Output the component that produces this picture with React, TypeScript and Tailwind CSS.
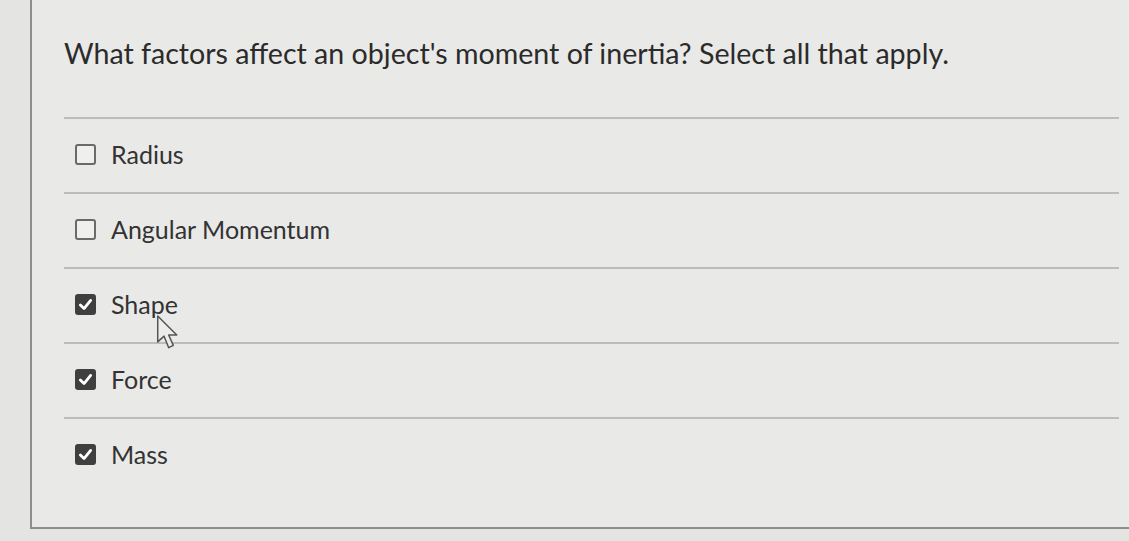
import React from "react";

const options = [
  { label: "Radius", checked: false },
  { label: "Angular Momentum", checked: false },
  { label: "Shape", checked: true },
  { label: "Force", checked: true },
  { label: "Mass", checked: true },
];

function Box({ checked }: { checked: boolean }) {
  if (checked) {
    return (
      <span className="flex h-[21px] w-[21px] items-center justify-center rounded-[3px] bg-[#3f3f3f]">
        <svg width="15" height="15" viewBox="0 0 14 14">
          <path d="M2.2 7.4 L5.6 10.8 L11.8 3.2" fill="none" stroke="#ffffff" strokeWidth="2.6" strokeLinecap="round" strokeLinejoin="round" />
        </svg>
      </span>
    );
  }
  return <span className="block h-[21px] w-[21px] rounded-[3px] border-2 border-[#6a6a6a] bg-[#efefed]" />;
}

export default function App() {
  return (
    <div className="h-[541px] w-[1129px] overflow-hidden bg-[#e4e4e2]" style={{ fontFamily: "Lato, 'Noto Sans', sans-serif" }}>
      <div className="ml-[30px] h-[529px] border-b-2 border-l-2 border-[#8e8e8e] bg-[#e9e9e7] pl-[32px] pr-[10px] pt-[36px]">
        <h1 className="h-[81px] text-[28.6px] leading-[34px] font-normal text-[#2b2b2b]">
          What factors affect an object's moment of inertia? Select all that apply.
        </h1>
        {options.map((o) => (
          <div key={o.label} className="relative flex h-[75px] items-center gap-[15px] border-t-2 border-[#bcbcba] pl-[11px] pb-[2px] text-[25px] text-[#333333]">
            <Box checked={o.checked} />
            <span className="leading-none">{o.label}</span>
            {o.label === "Shape" && (
              <svg className="absolute left-[92px] top-[45px] z-10" width="30" height="42" viewBox="0 0 26 36">
                <path d="M1.5 1.5 L1.5 24 L7 19 L11 29 L15 27 L11 18 L18 18 Z" fill="#ececea" stroke="#555555" strokeWidth="1.3" strokeLinejoin="round" />
              </svg>
            )}
          </div>
        ))}
      </div>
    </div>
  );
}
